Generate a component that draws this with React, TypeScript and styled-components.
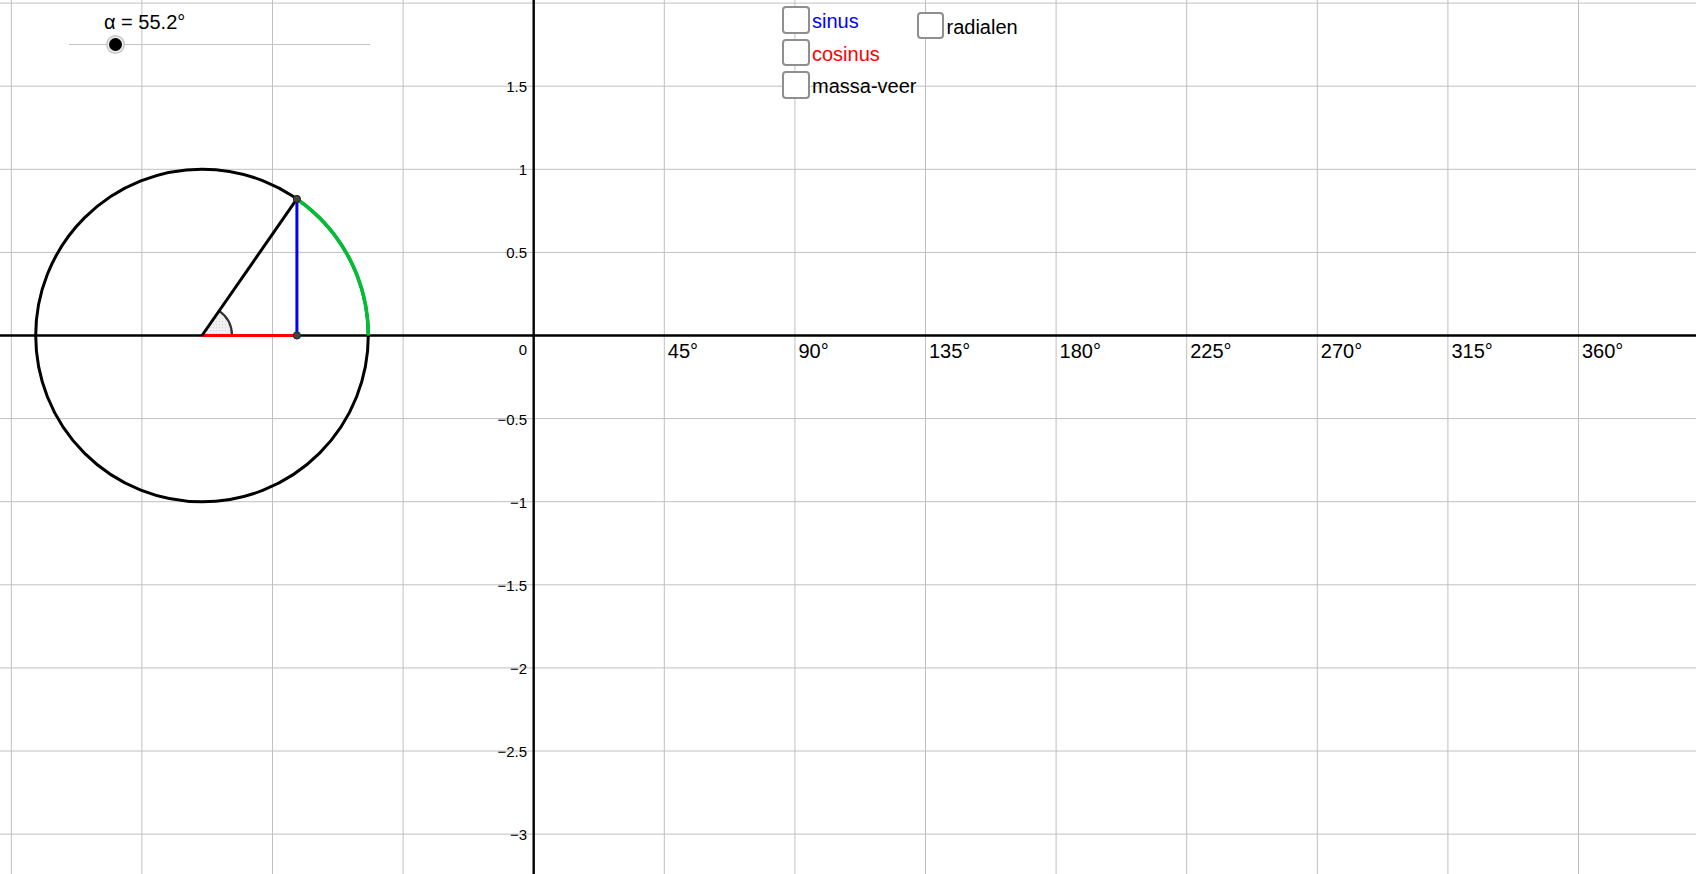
import React from "react";
import styled, { createGlobalStyle } from "styled-components";

const W = 1696;
const H = 874;
const OX = 533.7;
const OY = 335.5;
const GX = 130.6;
const GY = 83.1;
const CX = 202;
const R = 166.3;
const ALPHA = 55.2;

const GlobalStyle = createGlobalStyle`
  html, body { margin: 0; padding: 0; background: #ffffff; overflow: hidden; }
  body { font-family: "Liberation Sans", Arial, sans-serif; }
`;

const Stage = styled.div`
  position: relative;
  width: ${W}px;
  height: ${H}px;
  background: #ffffff;
  overflow: hidden;
`;

const Canvas = styled.svg`
  display: block;
  width: ${W}px;
  height: ${H}px;
  font-family: "Liberation Sans", Arial, sans-serif;
`;

const SliderWidget = styled.div`
  position: absolute;
  left: 69px;
  top: 11px;
  width: 301px;
  display: flex;
  flex-direction: column;
`;

const SliderLabel = styled.div`
  margin-left: 35px;
  font-size: 20px;
  line-height: 22px;
  color: #000;
  white-space: nowrap;
`;

const Track = styled.div`
  position: relative;
  margin-top: 10.5px;
  height: 1px;
  background: #c4c4c4;
`;

const Knob = styled.div`
  position: absolute;
  top: -6px;
  width: 13px;
  height: 13px;
  margin-left: -6.5px;
  border-radius: 50%;
  background: #000;
  box-shadow: 0 0 0 1.5px #ececec, 0 0 0 3px #c6c6c6;
`;

const CheckGroup = styled.div<{ $left: number; $top: number }>`
  position: absolute;
  left: ${(p) => p.$left}px;
  top: ${(p) => p.$top}px;
  display: flex;
  flex-direction: column;
  gap: 5px;
`;

const CheckRow = styled.label`
  display: flex;
  align-items: flex-start;
  gap: 2.5px;
  height: 27.5px;
  cursor: pointer;
`;

const Box = styled.span`
  box-sizing: border-box;
  width: 27.5px;
  height: 27.5px;
  border: 2px solid #8f8f8f;
  border-radius: 4px;
  background: #ffffff;
  flex: none;
`;

const CheckText = styled.span<{ $color: string }>`
  padding-top: 3px;
  font-size: 20px;
  line-height: 24px;
  color: ${(p) => p.$color};
  white-space: nowrap;
`;

const fmt = (v: number) => {
  const s = String(Math.abs(v));
  return v < 0 ? "\u2212" + s : s;
};

const Check: React.FC<{ label: string; color?: string }> = ({ label, color = "#000" }) => (
  <CheckRow>
    <Box />
    <CheckText $color={color}>{label}</CheckText>
  </CheckRow>
);

export default function App() {
  const a = (ALPHA * Math.PI) / 180;
  const px = CX + R * Math.cos(a);
  const py = OY - R * Math.sin(a);
  const ar = 30;
  const ax = CX + ar * Math.cos(a);
  const ay = OY - ar * Math.sin(a);

  const vLines: number[] = [];
  for (let k = -4; k <= 9; k++) if (k !== 0) vLines.push(OX + k * GX);
  const hLines: { y: number; v: number }[] = [];
  for (let k = -4; k <= 7; k++) if (k !== 0) hLines.push({ y: OY + k * GY, v: -k * 0.5 });

  const xLabels: { x: number; t: string }[] = [];
  for (let k = 1; k <= 8; k++) xLabels.push({ x: OX + k * GX + 3.5, t: `${45 * k}°` });

  const knobLeft = (ALPHA / 360) * 301;

  return (
    <>
      <GlobalStyle />
      <Stage>
        <Canvas viewBox={`0 0 ${W} ${H}`} xmlns="http://www.w3.org/2000/svg">
          <defs>
            <pattern id="dots" width="3" height="3" patternUnits="userSpaceOnUse">
              <rect width="3" height="3" fill="#f0f0f0" />
              <rect width="1" height="1" fill="#d8d8d8" />
            </pattern>
          </defs>
          <g stroke="#c0c0c0" strokeWidth="1">
            {vLines.map((x) => (
              <line key={"v" + x} x1={x} y1={0} x2={x} y2={H} />
            ))}
            {hLines.map((h) => (
              <line key={"h" + h.y} x1={0} y1={h.y} x2={W} y2={h.y} />
            ))}
          </g>
          <g stroke="#000" strokeWidth="2.4">
            <line x1={OX} y1={0} x2={OX} y2={H} />
            <line x1={0} y1={OY} x2={W} y2={OY} />
          </g>
          <g fontSize="15" fill="#000" textAnchor="end">
            {hLines
              .filter((h) => h.v <= 1.5 && h.v >= -3)
              .map((h) => (
                <text key={"l" + h.y} x={527} y={h.y + 6}>
                  {fmt(h.v)}
                </text>
              ))}
            <text x={527} y={354.5}>0</text>
          </g>
          <g fontSize="20" fill="#000">
            {xLabels.map((l) => (
              <text key={l.t} x={l.x} y={358}>
                {l.t}
              </text>
            ))}
          </g>

          <circle cx={CX} cy={OY} r={R} fill="none" stroke="#000" strokeWidth="3" />
          <path
            d={`M ${CX + R} ${OY} A ${R} ${R} 0 0 0 ${px} ${py}`}
            fill="none"
            stroke="#00bf33"
            strokeWidth="3.6"
          />
          <path
            d={`M ${CX} ${OY} L ${CX + ar} ${OY} A ${ar} ${ar} 0 0 0 ${ax} ${ay} Z`}
            fill="url(#dots)"
            stroke="none"
          />
          <path
            d={`M ${CX + ar} ${OY} A ${ar} ${ar} 0 0 0 ${ax} ${ay}`}
            fill="none"
            stroke="#333"
            strokeWidth="2.2"
          />
          <line x1={CX} y1={OY} x2={px} y2={OY} stroke="#ff0000" strokeWidth="3" />
          <line x1={px} y1={OY} x2={px} y2={py} stroke="#0000ff" strokeWidth="3" />
          <line x1={CX} y1={OY} x2={px} y2={py} stroke="#000" strokeWidth="3" />
          <circle cx={px} cy={py} r={3.6} fill="#444" stroke="#222" strokeWidth="1" />
          <circle cx={px} cy={OY} r={3.6} fill="#444" stroke="#222" strokeWidth="1" />
        </Canvas>

        <SliderWidget>
          <SliderLabel>α = {ALPHA.toFixed(1)}°</SliderLabel>
          <Track>
            <Knob style={{ left: `${knobLeft}px` }} />
          </Track>
        </SliderWidget>

        <CheckGroup $left={782} $top={6}>
          <Check label="sinus" color="#0000ff" />
          <Check label="cosinus" color="#ff0000" />
          <Check label="massa-veer" />
        </CheckGroup>
        <CheckGroup $left={916.5} $top={11.5}>
          <Check label="radialen" />
        </CheckGroup>
      </Stage>
    </>
  );
}
